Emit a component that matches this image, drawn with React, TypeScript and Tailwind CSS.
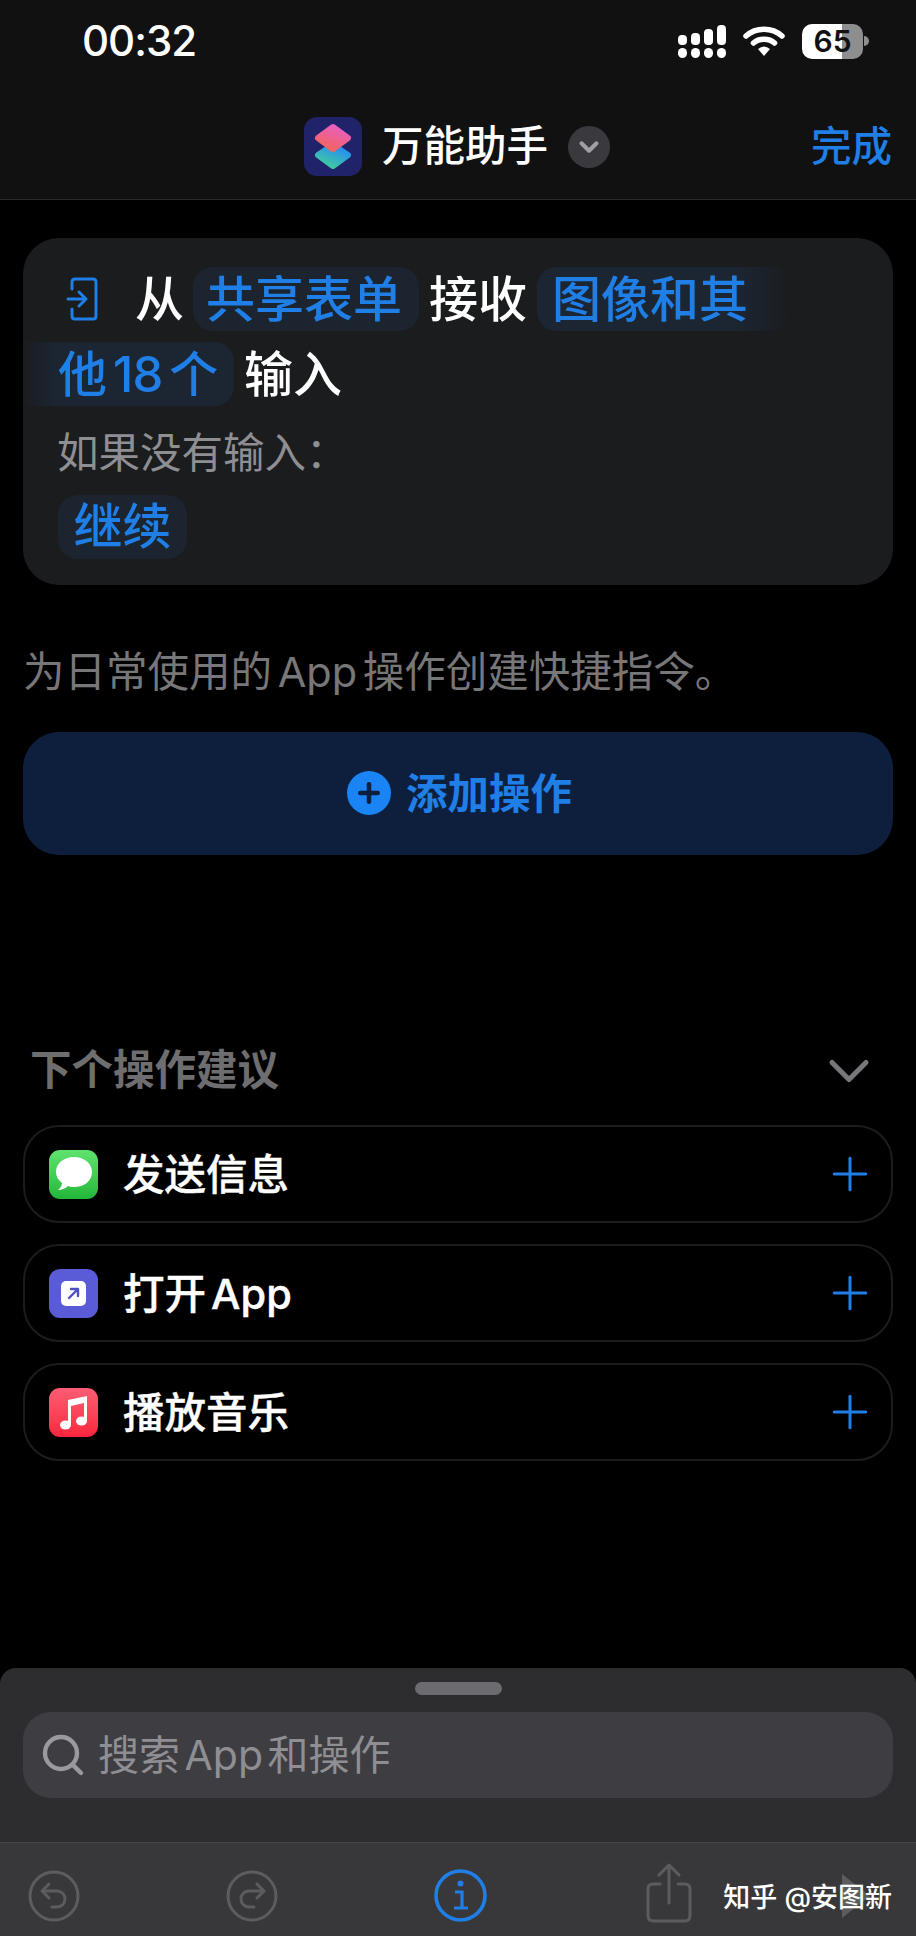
import { ChevronDown, Plus, Search } from "lucide-react";

const Chip = ({ children, className = "" }: { children: React.ReactNode; className?: string }) => (
  <span className={`flex h-[64px] items-center rounded-[20px] text-[49px] font-medium leading-none text-[#1f7fe6] ${className}`}>
    {children}
  </span>
);

function SignalIcon() {
  const bars = [10, 12, 16, 20];
  return (
    <div className="flex items-end gap-[4px]">
      {bars.map((h, i) => (
        <div key={i} className="flex w-[9px] flex-col gap-[3px]">
          <div className="rounded-[4px] bg-white" style={{ height: h }} />
          <div className="h-[10px] rounded-full bg-white" />
        </div>
      ))}
    </div>
  );
}

function WifiIcon() {
  return (
    <svg width="42" height="32" viewBox="0 0 42 32" fill="none">
      <path d="M3 11 C13 2 29 2 39 11" stroke="white" strokeWidth="5.5" strokeLinecap="round" />
      <path d="M10.5 18 C16 13 26 13 31.5 18" stroke="white" strokeWidth="5.5" strokeLinecap="round" />
      <path d="M15 24 Q21 19 27 24 L21 31 Z" fill="white" />
    </svg>
  );
}

function ShortcutsLogo() {
  return (
    <svg width="58" height="59" viewBox="0 0 58 59" className="shrink-0">
      <defs>
        <linearGradient id="top" x1="0.7" y1="0" x2="0.2" y2="1">
          <stop offset="0" stopColor="#e85fc0" />
          <stop offset="1" stopColor="#f4645a" />
        </linearGradient>
        <linearGradient id="bottom" x1="0.9" y1="0.1" x2="0.4" y2="1">
          <stop offset="0" stopColor="#2488f8" />
          <stop offset="1" stopColor="#3fc7a4" />
        </linearGradient>
      </defs>
      <rect width="58" height="59" rx="13" fill="#20226a" />
      <path d="M29 28 L44 38 L29 49 L14 38 Z" fill="url(#bottom)" stroke="url(#bottom)" strokeWidth="6" strokeLinejoin="round" />
      <path d="M29 10 L44 21 L29 32 L14 21 Z" fill="url(#top)" stroke="url(#top)" strokeWidth="6" strokeLinejoin="round" />
    </svg>
  );
}

function ReceiveIcon() {
  return (
    <svg width="32" height="44" viewBox="0 0 32 44" fill="none" stroke="#1f7fe6" strokeWidth="3" strokeLinecap="round" strokeLinejoin="round" className="shrink-0">
      <path d="M6 12 V5 Q6 2 9 2 H27 Q30 2 30 5 V39 Q30 42 27 42 H9 Q6 42 6 39 V32" />
      <path d="M2 22 H20 M13 15 L20 22 L13 29" />
    </svg>
  );
}

function MessagesIcon() {
  return (
    <div className="flex h-[49px] w-[49px] shrink-0 items-center justify-center rounded-[11px] bg-linear-to-b from-[#5fe36e] to-[#20b83a]">
      <svg width="40" height="38" viewBox="0 0 40 38">
        <path d="M20 2 C31 2 38 9 38 17 C38 26 30 32 20 32 C18 32 16 32 14 31 C12 33 8 35 4 35 C6 33 8 31 8 28 C4 25 2 21 2 17 C2 9 9 2 20 2 Z" fill="white" />
      </svg>
    </div>
  );
}

function OpenAppIcon() {
  return (
    <div className="flex h-[49px] w-[49px] shrink-0 items-center justify-center rounded-[11px] bg-[#5a5bd6]">
      <div className="flex h-[25px] w-[25px] items-center justify-center rounded-[5px] bg-white">
        <svg width="15" height="15" viewBox="0 0 15 15" fill="none" stroke="#4f50c8" strokeWidth="2.4" strokeLinecap="round" strokeLinejoin="round">
          <path d="M3 12 L11.5 3.5 M5 3 H12 V10" />
        </svg>
      </div>
    </div>
  );
}

function MusicIcon() {
  return (
    <div className="flex h-[49px] w-[49px] shrink-0 items-center justify-center rounded-[11px] bg-linear-to-b from-[#fb5c74] to-[#fa233b]">
      <svg width="30" height="36" viewBox="0 0 30 36" fill="white">
        <path d="M9 6 L28 2 V27 H25 V9 L12 12 V31 H9 Z" />
        <ellipse cx="6.5" cy="31" rx="5.5" ry="4.5" />
        <ellipse cx="22.5" cy="27" rx="5.5" ry="4.5" />
      </svg>
    </div>
  );
}

const suggestions = [
  { icon: <MessagesIcon />, label: "发送信息" },
  { icon: <OpenAppIcon />, label: "打开 App" },
  { icon: <MusicIcon />, label: "播放音乐" },
];

export default function App() {
  return (
    <div className="relative flex h-[1936px] w-[916px] flex-col overflow-hidden bg-black text-white [font-family:Inter,'Noto_Sans_CJK_SC',sans-serif]">
      {/* ================= Status bar + nav ================= */}
      <header className="h-[200px] shrink-0 border-b border-[#2a2a2c] bg-[#111112]">
        <div className="flex h-[82px] items-center pl-[82px] pr-[47px]">
          <span className="text-[42px] font-medium leading-none tracking-[-1px]">00:32</span>
          <div className="ml-auto flex items-center">
            <SignalIcon />
            <div className="ml-[17px]">
              <WifiIcon />
            </div>
            <div className="relative ml-[17px] flex h-[35px] w-[61px] items-center justify-center overflow-hidden rounded-[10px] bg-linear-to-r from-white from-65% to-[#8e8e8e] to-65%">
              <span className="text-[30px] font-semibold leading-none text-[#111]">65</span>
            </div>
            <div className="ml-[1px] h-[10px] w-[5px] rounded-r-full bg-[#8e8e8e]" />
          </div>
        </div>
        <div className="flex items-center pl-[304px] pr-[24px] pt-[35px]">
          <ShortcutsLogo />
          <span className="ml-[20px] text-[41.5px] font-medium leading-none">万能助手</span>
          <div className="ml-[20px] flex h-[42px] w-[42px] items-center justify-center rounded-full bg-[#3a3a3e]">
            <ChevronDown size={30} strokeWidth={3.2} className="text-[#a0a0a4]" />
          </div>
          <span className="ml-auto pt-[2px] text-[40.5px] font-medium leading-none text-[#1f7fe6]">完成</span>
        </div>
      </header>

      {/* ================= Receive card ================= */}
      <section className="mx-[23px] mt-[38px] h-[347px] shrink-0 rounded-[36px] bg-[#1b1c1e] pt-[29px]">
        <div className="flex items-center pl-[43px]">
          <ReceiveIcon />
          <span className="ml-[37px] text-[49px] font-medium leading-none">从</span>
          <Chip className="ml-[9px] bg-[#1c2430] pl-[13px] pr-[17px]">共享表单</Chip>
          <span className="ml-[10px] text-[49px] font-medium leading-none">接收</span>
          <Chip className="ml-[10px] w-[253px] bg-linear-to-r from-[#1c2532] from-80% to-transparent pl-[15px]">图像和其</Chip>
        </div>
        <div className="mt-[11px] flex items-center">
          <Chip className="w-[211px] rounded-l-none bg-linear-to-r from-transparent to-[#1c2532] to-15% pl-[35px] [word-spacing:-5px] tracking-[-1px]">他 18 个</Chip>
          <span className="ml-[10px] text-[49px] font-medium leading-none">输入</span>
        </div>
        <div className="mt-[27px] pl-[34px] text-[41.5px] leading-none text-[#8e8e93]">如果没有输入：</div>
        <Chip className="ml-[35px] mt-[20px] w-[129px] justify-center bg-[#1c2430]">继续</Chip>
      </section>

      {/* ================= Description + add action ================= */}
      <p className="mt-[67px] pl-[23px] text-[41.5px] leading-none text-[#777779] [word-spacing:-6px]">为日常使用的 App 操作创建快捷指令。</p>
      <button className="mx-[23px] mt-[38px] flex h-[123px] shrink-0 items-center justify-center rounded-[36px] bg-[#0e1f3d] pl-[3px]">
        <span className="flex h-[44px] w-[44px] items-center justify-center rounded-full bg-[#1a84f5]">
          <Plus size={30} strokeWidth={3.6} className="text-[#0e1f3d]" />
        </span>
        <span className="ml-[15px] pt-[4px] text-[41.5px] font-semibold leading-none text-[#1f7fe6]">添加操作</span>
      </button>

      {/* ================= Suggestions ================= */}
      <div className="mt-[193px] flex items-center pl-[30px] pr-[33px]">
        <span className="pt-[2px] text-[41.5px] font-semibold leading-none text-[#6e6e70]">下个操作建议</span>
        <ChevronDown size={68} strokeWidth={1.8} className="-my-[18px] ml-auto translate-y-[2px] text-[#77777a]" />
      </div>
      <div className="mx-[23px] mt-[34px] flex flex-col gap-[21px]">
        {suggestions.map((s) => (
          <div key={s.label} className="flex h-[98px] items-center rounded-[36px] border-2 border-[#1c1c1e] pl-[24px] pr-[14px]">
            {s.icon}
            <span className="ml-[25px] pt-[3px] text-[41.5px] font-medium leading-none [word-spacing:-6px] [-webkit-text-stroke:0.4px_white]">{s.label}</span>
            <Plus size={54} strokeWidth={1.35} className="ml-auto text-[#1f7fe6]" />
          </div>
        ))}
      </div>

      {/* ================= Bottom sheet ================= */}
      <div className="mt-auto flex h-[268px] shrink-0 flex-col rounded-t-[16px] bg-[#2d2d30]">
        <div className="mx-auto mt-[14px] h-[13px] w-[87px] rounded-full bg-[#6b6b70]" />
        <div className="mx-[23px] mt-[17px] flex h-[86px] items-center rounded-[28px] bg-[#3e3e42] pl-[16px]">
          <Search size={48} strokeWidth={2.2} className="text-[#9a9a9e]" />
          <span className="ml-[11px] text-[41px] leading-none text-[#8e8e93] [word-spacing:-7px]">搜索 App 和操作</span>
        </div>
        <div className="mt-auto flex h-[94px] items-center border-t border-[#444446] bg-[#38383a] pt-[12px]">
          <svg width="52" height="52" viewBox="0 0 52 52" fill="none" stroke="#5c5c5e" strokeWidth="3" strokeLinecap="round" strokeLinejoin="round" className="ml-[28px]">
            <circle cx="26" cy="26" r="24" />
            <path d="M21 14 L14 21 L21 28 M14 21 H29 C34 21 37 25 37 29 C37 34 33 37 29 37 H24" />
          </svg>
          <svg width="52" height="52" viewBox="0 0 52 52" fill="none" stroke="#5c5c5e" strokeWidth="3" strokeLinecap="round" strokeLinejoin="round" className="ml-[146px]">
            <circle cx="26" cy="26" r="24" />
            <path d="M31 14 L38 21 L31 28 M38 21 H23 C18 21 15 25 15 29 C15 34 19 37 23 37 H28" />
          </svg>
          <svg width="53" height="53" viewBox="0 0 53 53" fill="none" className="ml-[156px]">
            <circle cx="26.5" cy="26.5" r="24.5" stroke="#1f7fe6" strokeWidth="3.6" />
            <circle cx="26.5" cy="14.5" r="3" fill="#1f7fe6" />
            <path d="M21 23 H28 V38 M20 39 H34" stroke="#1f7fe6" strokeWidth="3.2" />
          </svg>
          <svg width="46" height="60" viewBox="0 0 46 60" fill="none" stroke="#5c5c5e" strokeWidth="3" strokeLinecap="round" strokeLinejoin="round" className="-my-[8px] ml-[159px] -translate-y-[3px]">
            <path d="M14 21 H7 Q2 21 2 26 V52 Q2 58 7 58 H39 Q44 58 44 52 V26 Q44 21 39 21 H32" />
            <path d="M23 40 V3 M13 12 L23 2 L33 12" />
          </svg>
          <div className="ml-[150px] h-0 w-0 border-y-[22px] border-l-[28px] border-y-transparent border-l-[#5c5c5e]" />
        </div>
      </div>

      <span className="absolute bottom-[25px] right-[24px] text-[27px] font-medium leading-none text-white">知乎 @安图新</span>
    </div>
  );
}
